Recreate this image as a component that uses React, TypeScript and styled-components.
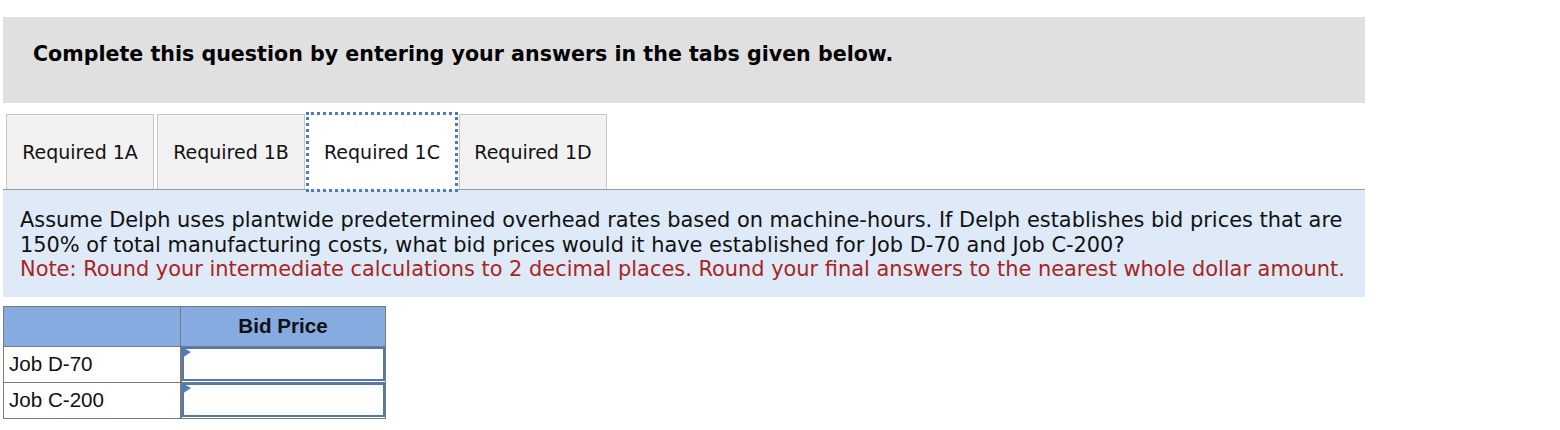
import React from "react";
import styled, { createGlobalStyle } from "styled-components";

const Global = createGlobalStyle`
  html, body { margin: 0; padding: 0; background: #ffffff; }
  body { font-family: "DejaVu Sans", Verdana, sans-serif; color: #111; }
`;

const Page = styled.div`
  padding: 17px 0 0 3px;
  width: 1362px;
`;

const Banner = styled.div`
  background: #e0e0e0;
  height: 86px;
  box-sizing: border-box;
  padding: 25px 0 0 30px;
  font-weight: bold;
  font-size: 20.6px;
  line-height: 24px;
  color: #000;
`;

const TabRow = styled.div`
  display: flex;
  gap: 3px;
  margin-top: 11px;
  padding-left: 3px;
  position: relative;
  z-index: 1;
`;

const Tab = styled.div<{ $active?: boolean }>`
  width: 148px;
  box-sizing: border-box;
  display: flex;
  align-items: center;
  justify-content: center;
  font-size: 19px;
  color: #111;
  background: ${(p) => (p.$active ? "#ffffff" : "#f2f2f2")};
  border: ${(p) => (p.$active ? "none" : "1px solid #c6c6c6")};
  border-bottom: none;
  outline: ${(p) => (p.$active ? "3px dotted #4d7ac2" : "none")};
  outline-offset: -1px;
  margin-bottom: ${(p) => (p.$active ? "-1px" : "0")};
  height: ${(p) => (p.$active ? "76px" : "75px")};
`;

const Panel = styled.div`
  background: #deeaf7;
  border-top: 1px solid #9a9a9a;
  padding: 18px 17px 15px 17px;
  font-size: 20.9px;
  line-height: 24.5px;
  color: #111;
`;

const Note = styled.div`
  color: #a8251e;
`;

const Table = styled.table`
  margin-top: 9px;
  border-collapse: collapse;
  font-family: "Liberation Sans", Arial, sans-serif;
  font-size: 20.6px;
  color: #111;
`;

const HeadCell = styled.th<{ $w: number }>`
  background: #85abe0;
  border: 1px solid #7a7a7a;
  height: 40px;
  padding: 0;
  font-weight: bold;
  text-align: center;
  width: ${(p) => p.$w}px;
  box-sizing: border-box;
`;

const LabelCell = styled.td`
  border: 1px solid #7a7a7a;
  height: 36px;
  padding: 0 0 0 5px;
  text-align: left;
  box-sizing: border-box;
`;

const InputCell = styled.td`
  border: 1px solid #7a7a7a;
  border-left: 2px solid #7a7a7a;
  padding: 0;
  height: 36px;
  position: relative;
  box-sizing: border-box;
`;

const Input = styled.div`
  margin: 0;
  height: 34px;
  border: 2px solid #5078b8;
  box-sizing: border-box;
  background: #fff;
`;

const Marker = styled.svg`
  position: absolute;
  left: 0;
  top: 0;
`;

const rows = ["Job D-70", "Job C-200"];

export default function App() {
  return (
    <>
      <Global />
      <Page>
        <Banner>Complete this question by entering your answers in the tabs given below.</Banner>
        <TabRow>
          <Tab>Required 1A</Tab>
          <Tab>Required 1B</Tab>
          <Tab $active>Required 1C</Tab>
          <Tab>Required 1D</Tab>
        </TabRow>
        <Panel>
          Assume Delph uses plantwide predetermined overhead rates based on machine-hours. If Delph establishes bid prices that are 150% of total manufacturing costs, what bid prices would it have established for Job D-70 and Job C-200?
          <Note>Note: Round your intermediate calculations to 2 decimal places. Round your final answers to the nearest whole dollar amount.</Note>
        </Panel>
        <Table>
          <thead>
            <tr>
              <HeadCell $w={177}></HeadCell>
              <HeadCell $w={205}>Bid Price</HeadCell>
            </tr>
          </thead>
          <tbody>
            {rows.map((r) => (
              <tr key={r}>
                <LabelCell>{r}</LabelCell>
                <InputCell>
                  <Input />
                  <Marker width="10" height="12" viewBox="0 0 10 12">
                    <polygon points="0,0 9,5 0,11" fill="#4d7ac2" />
                  </Marker>
                </InputCell>
              </tr>
            ))}
          </tbody>
        </Table>
      </Page>
    </>
  );
}
